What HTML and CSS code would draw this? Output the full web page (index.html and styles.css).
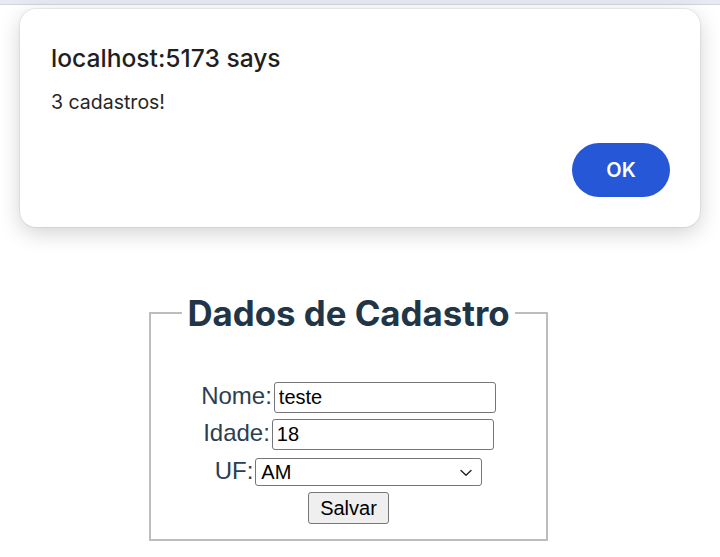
FILE: index.html
```html
<!DOCTYPE html>
<html lang="pt-BR">
<head>
<meta charset="utf-8">
<title>Cadastro</title>
<link rel="stylesheet" href="styles.css">
</head>
<body>
<div class="topbar"></div>
<main class="page">
  <fieldset class="card">
    <legend class="card-title">Dados de Cadastro</legend>
    <form class="form">
      <div class="row row-nome">
        <label class="lbl" for="nome">Nome:</label>
        <input class="field field-nome" id="nome" type="text" value="teste">
      </div>
      <div class="row row-idade">
        <label class="lbl" for="idade">Idade:</label>
        <input class="field field-idade" id="idade" type="text" value="18">
      </div>
      <div class="row row-uf">
        <label class="lbl" for="uf">UF:</label>
        <span class="select-wrap">
          <select class="field field-uf" id="uf">
            <option>AM</option>
            <option>SP</option>
            <option>RJ</option>
          </select>
          <svg class="chev" width="12" height="8" viewBox="0 0 12 8" aria-hidden="true">
            <path d="M1 1.5 L6 6.2 L11 1.5" fill="none" stroke="#222" stroke-width="1.4" stroke-linecap="round" stroke-linejoin="round"/>
          </svg>
        </span>
      </div>
      <div class="row row-btn">
        <button class="btn" type="button">Salvar</button>
      </div>
    </form>
  </fieldset>
</main>
<div class="dialog" role="alertdialog">
  <div class="dialog-title">localhost:5173 says</div>
  <div class="dialog-msg">3 cadastros!</div>
  <div class="dialog-actions">
    <button class="ok" type="button">OK</button>
  </div>
</div>
</body>
</html>
```

FILE: styles.css
```css
html, body {
  margin: 0;
  padding: 0;
  background: #ffffff;
}
body {
  width: 720px;
  height: 557px;
  overflow: hidden;
  font-family: "Liberation Sans", Arial, sans-serif;
}
.topbar {
  height: 4px;
  background: #e6eaf1;
  border-bottom: 1px solid #d3d6db;
}
.page {
  padding-top: 289px;
}
.card {
  margin: 0 0 0 149px;
  width: 399px;
  box-sizing: border-box;
  border: 2px solid #bdbdbd;
  padding: 50px 10px 15px;
}
.card-title {
  margin: 0 auto;
  padding: 0 5px;
  font-family: Inter, "Liberation Sans", sans-serif;
  font-weight: 700;
  font-size: 34.8px;
  line-height: 38px;
  color: #213547;
}
.form {
  display: flex;
  flex-direction: column;
  align-items: center;
}
.row {
  display: flex;
  align-items: baseline;
  justify-content: center;
  gap: 2px;
}
.row-idade { margin-top: 6px; }
.row-uf { margin-top: 8px; }
.row-btn { margin-top: 6px; }
.lbl {
  font-family: "Liberation Sans", Arial, sans-serif;
  font-size: 24px;
  line-height: 1;
  color: #2c3e50;
}
.field {
  box-sizing: border-box;
  font-family: "Liberation Sans", Arial, sans-serif;
  font-size: 20px;
  color: #000;
  border: 1px solid #767676;
  border-radius: 3px;
  background: #fff;
  margin: 0;
}
.field-nome, .field-idade {
  width: 222px;
  height: 31px;
  padding: 1px 4px;
}
.select-wrap {
  position: relative;
  display: inline-block;
}
.field-uf {
  -webkit-appearance: none;
  appearance: none;
  width: 227px;
  height: 28px;
  padding: 0 24px 0 5px;
}
.chev {
  position: absolute;
  right: 10px;
  top: 11px;
  pointer-events: none;
}
.btn {
  box-sizing: border-box;
  width: 81px;
  height: 32px;
  font-family: "Liberation Sans", Arial, sans-serif;
  font-size: 20px;
  color: #000;
  background: #efefef;
  border: 1px solid #767676;
  border-radius: 3px;
  padding: 0;
}
.dialog {
  position: absolute;
  left: 20px;
  top: 9px;
  width: 680px;
  height: 218px;
  box-sizing: border-box;
  background: #ffffff;
  border-radius: 16px;
  box-shadow: 0 0 0 1px rgba(0,0,0,0.06), 0 6px 22px rgba(0,0,0,0.18);
  padding: 33px 30px 30px 31px;
  font-family: Inter, "Liberation Sans", sans-serif;
  color: #1f1f1f;
}
.dialog-title {
  font-size: 24.6px;
  font-weight: 500;
  line-height: 32px;
}
.dialog-msg {
  margin-top: 15px;
  font-size: 19.5px;
  line-height: 26px;
  color: #262626;
}
.dialog-actions {
  display: flex;
  justify-content: flex-end;
  margin-top: 28px;
}
.ok {
  width: 98px;
  height: 54px;
  border: none;
  border-radius: 27px;
  background: #2557d6;
  color: #ffffff;
  font-family: Inter, "Liberation Sans", sans-serif;
  font-size: 20px;
  font-weight: 600;
}
```
